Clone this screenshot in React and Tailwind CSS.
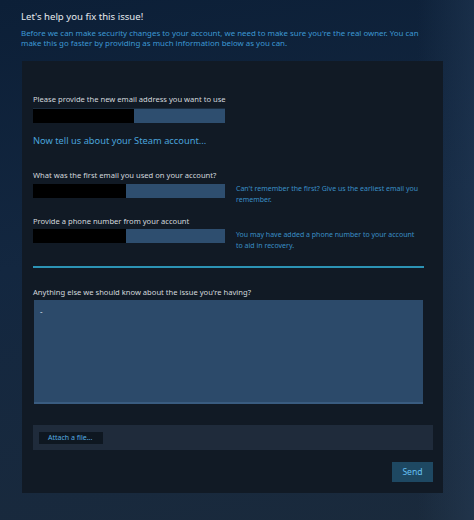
export default function App() {
  const font = { fontFamily: '"Noto Sans", "Liberation Sans", Arial, sans-serif' };
  return (
    <div
      className="w-[474px] h-[520px] overflow-hidden bg-[linear-gradient(90deg,rgba(0,0,0,0)_88%,rgba(45,70,100,0.35)_100%),linear-gradient(170deg,#0c1f37_0%,#132740_45%,#1a2a3c_100%)] pl-[21px] pt-[11px]"
      style={font}
    >
      <div className="text-[9.6px] leading-[12px] text-[#e6eaee]">Let's help you fix this issue!</div>
      <p className="mt-[4.5px] w-[398px] text-[7.9px] leading-[10.5px] text-[#3d98d3]">
        Before we can make security changes to your account, we need to make sure you're the real owner. You can make this go faster by providing as much information below as you can.
      </p>
      <div className="ml-[1px] mt-[12.5px] w-[421px] h-[432px] bg-[#111a25] pl-[11px] pr-[10px] pt-[32px]">
        <div className="text-[7.6px] leading-[12px] text-[#d3d8dd]">Please provide the new email address you want to use</div>
        <div className="mt-[3px] w-[192px] h-[15px] bg-[#2e4e6f] border-t border-[#1b2c3e]">
          <div className="w-[101px] h-full bg-black"></div>
        </div>
        <div className="mt-[11px] text-[9.3px] leading-[14px] text-[#4aa3db]">Now tell us about your Steam account...</div>

        <div className="mt-[21px] text-[7.6px] leading-[12px] text-[#d3d8dd]">What was the first email you used on your account?</div>
        <div className="mt-[3px] h-[14px] flex items-start">
          <div className="w-[192px] h-[14px] bg-[#2e4e6f] shrink-0">
            <div className="w-[93px] h-full bg-black"></div>
          </div>
          <div className="ml-[11px] -mt-[1.5px] w-[184px] text-[7px] leading-[11px] text-[#3a8fc6]">
            Can't remember the first? Give us the earliest email you remember.
          </div>
        </div>

        <div className="mt-[17px] text-[7.6px] leading-[12px] text-[#d3d8dd]">Provide a phone number from your account</div>
        <div className="mt-[2px] h-[14px] flex items-start">
          <div className="w-[192px] h-[14px] bg-[#2e4e6f] shrink-0">
            <div className="w-[93px] h-full bg-black"></div>
          </div>
          <div className="ml-[11px] -mt-[0.5px] w-[184px] text-[7px] leading-[11px] text-[#3a8fc6]">
            You may have added a phone number to your account to aid in recovery.
          </div>
        </div>

        <div className="mt-[23px] w-[391px] h-[2px] bg-[#2c93b5]"></div>

        <div className="mt-[18px] text-[7.6px] leading-[12px] text-[#d3d8dd]">Anything else we should know about the issue you're having?</div>
        <div className="mt-[2px] ml-[1px] w-[389px] h-[104px] bg-[#2c4a6a] border-b-2 border-[#3a5c80] pl-[6px] pt-[6px]">
          <div className="text-[8px] leading-[12px] text-[#c9d6e2]">-</div>
        </div>

        <div className="mt-[21px] w-[400px] h-[25px] bg-[#1f2b3b] flex items-center pl-[6px]">
          <div className="w-[64px] h-[12px] bg-[#0e1721] pl-[9px] text-[7px] leading-[12px] text-[#56aee0]">Attach a file...</div>
        </div>

        <div className="mt-[12px] w-[400px] flex justify-end">
          <div className="w-[41px] h-[20px] bg-[#1e4862] flex items-center justify-center text-[8.6px] text-[#66c0f4]">Send</div>
        </div>
      </div>
    </div>
  );
}
